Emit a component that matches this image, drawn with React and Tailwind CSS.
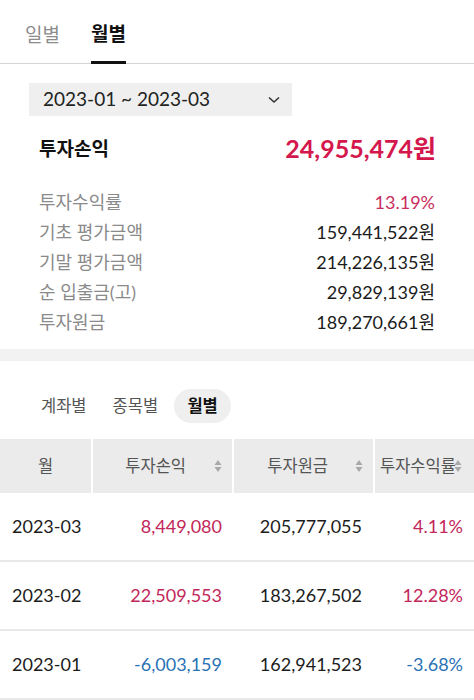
import React from 'react';

const FONT = { fontFamily: 'Lato, "Noto Sans CJK KR", sans-serif' };

const summary = [
  { label: '투자수익률', value: '13.19%', color: 'text-[#c92d5e]' },
  { label: '기초 평가금액', value: '159,441,522원' },
  { label: '기말 평가금액', value: '214,226,135원' },
  { label: '순 입출금(고)', value: '29,829,139원' },
  { label: '투자원금', value: '189,270,661원' },
];

const rows = [
  { month: '2023-03', pnl: '8,449,080', principal: '205,777,055', rate: '4.11%', up: true },
  { month: '2023-02', pnl: '22,509,553', principal: '183,267,502', rate: '12.28%', up: true },
  { month: '2023-01', pnl: '-6,003,159', principal: '162,941,523', rate: '-3.68%', up: false },
];

const SortIcon = () => (
  <svg width="8" height="14" viewBox="0 0 8 14" className="shrink-0">
    <path d="M4 1 L7.5 6 H0.5 Z" fill="#a8a8a8" />
    <path d="M4 13 L7.5 8 H0.5 Z" fill="#a8a8a8" />
  </svg>
);

export default function App() {
  return (
    <div className="w-[474px] h-[700px] overflow-hidden bg-white text-[#222]" style={FONT}>
      {/* top tabs */}
      <div className="h-[64px] border-b border-[#d4d4d4] flex gap-[31px] pl-[25px]">
        <div className="h-full flex items-center pt-[8px] text-[19px] text-[#8c8c8c]">일별</div>
        <div className="h-full flex flex-col">
          <div className="flex-1 flex items-center pt-[8px] text-[19px] font-bold text-[#111]">월별</div>
          <div className="h-[3px] bg-[#111] -mb-[1px]" />
        </div>
      </div>

      {/* period select */}
      <div className="px-[29px] pt-[19px]">
        <div className="w-[263px] h-[33px] bg-[#efefef] flex items-center justify-between pl-[14px] pr-[12px]">
          <span className="text-[19px] text-[#222]">2023-01 ~ 2023-03</span>
          <svg width="12" height="8" viewBox="0 0 12 8">
            <path d="M1 1.5 L6 6 L11 1.5" fill="none" stroke="#333" strokeWidth="1.6" />
          </svg>
        </div>
      </div>

      {/* summary */}
      <div className="px-[39px] pt-[17px]">
        <div className="flex items-center justify-between h-[32px]">
          <span className="text-[19px] font-bold text-[#111]">투자손익</span>
          <span className="text-[25px] font-bold text-[#d4174c] -mr-[1px]">24,955,474원</span>
        </div>
        <div className="mt-[22px] flex flex-col">
          {summary.map((s) => (
            <div key={s.label} className="flex items-center justify-between h-[30px]">
              <span className="text-[18px] text-[#8a8a8a]">{s.label}</span>
              <span className={`text-[18px] ${s.color || 'text-[#1c1c1c]'}`}>{s.value}</span>
            </div>
          ))}
        </div>
      </div>

      <div className="mt-[12px] h-[12px] bg-[#f2f2f2]" />

      {/* sub tabs */}
      <div className="flex items-center pl-[41px] pt-[28px]">
        <span className="text-[16.5px] text-[#555]">계좌별</span>
        <span className="ml-[26px] text-[16.5px] text-[#555]">종목별</span>
        <span className="ml-[16px] h-[34px] w-[57px] rounded-full bg-[#efefef] flex items-center justify-center text-[16.5px] font-bold text-[#111]">월별</span>
      </div>

      {/* table */}
      <div className="mt-[16px] grid grid-cols-[91px_141px_141px_101px] text-[16.5px] text-[#555]">
        <div className="h-[54px] bg-[#ebebeb] flex items-center justify-center">월</div>
        <div className="h-[54px] bg-[#ebebeb] border-l-2 border-white flex items-center justify-end pr-[10px] gap-[28px]">
          <span>투자손익</span>
          <SortIcon />
        </div>
        <div className="h-[54px] bg-[#ebebeb] border-l-2 border-white flex items-center justify-end pr-[10px] gap-[27px]">
          <span>투자원금</span>
          <SortIcon />
        </div>
        <div className="h-[54px] bg-[#ebebeb] border-l-2 border-white flex items-center pl-[5px] overflow-hidden whitespace-nowrap">
          <span>투자수익률</span>
          <span className="-ml-[2px] flex"><SortIcon /></span>
        </div>

        {rows.map((r) => {
          const c = r.up ? 'text-[#c2275a]' : 'text-[#2a72b5]';
          return (
            <React.Fragment key={r.month}>
              <div className="h-[69px] border-b-2 border-[#e8e8e8] flex items-center pl-[12px] text-[18px] text-[#1c1c1c]">{r.month}</div>
              <div className={`h-[69px] border-b-2 border-[#e8e8e8] flex items-center justify-end pr-[10px] text-[18px] ${c}`}>{r.pnl}</div>
              <div className="h-[69px] border-b-2 border-[#e8e8e8] flex items-center justify-end pr-[11px] text-[18px] text-[#1c1c1c]">{r.principal}</div>
              <div className={`h-[69px] border-b-2 border-[#e8e8e8] flex items-center justify-end pr-[11px] text-[18px] ${c}`}>{r.rate}</div>
            </React.Fragment>
          );
        })}
      </div>
    </div>
  );
}
